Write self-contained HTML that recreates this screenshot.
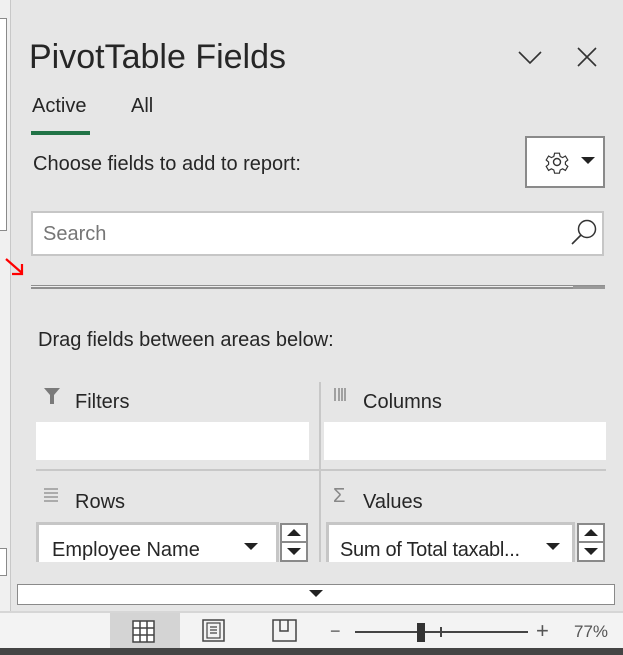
<!DOCTYPE html>
<html><head><style>
*{margin:0;padding:0;box-sizing:border-box}
body{width:623px;height:655px;overflow:hidden;background:#e6e6e6;font-family:"Segoe UI","Liberation Sans",sans-serif;color:#262626;position:relative}
.a{position:absolute}
.t{position:absolute;white-space:nowrap;line-height:1}
</style></head><body>
<div class="a" style="left:0;top:0;width:10px;height:612px;background:#f0f0f0"></div>
<div class="a" style="left:-2px;top:18px;width:9px;height:213px;background:#fff;border:1px solid #8a8a8a"></div>
<div class="a" style="left:-2px;top:548px;width:9px;height:28px;background:#fff;border:1px solid #8a8a8a"></div>
<div class="a" style="left:10px;top:0;width:1px;height:612px;background:#c8c8c8"></div>

<div class="t" style="left:29px;top:40px;font-size:34px;color:#262626">PivotTable Fields</div>
<svg class="a" style="left:517px;top:48px" width="26" height="18"><path d="M2 4 L13 15 L24 4" stroke="#333" stroke-width="1.6" fill="none"/></svg>
<svg class="a" style="left:576px;top:46px" width="22" height="22"><path d="M2 2 L20 20 M20 2 L2 20" stroke="#333" stroke-width="1.6" fill="none"/></svg>

<div class="t" style="left:32px;top:96px;font-size:20px">Active</div>
<div class="t" style="left:131px;top:96px;font-size:20px">All</div>
<div class="a" style="left:31px;top:131px;width:59px;height:4px;background:#217346"></div>

<div class="t" style="left:33px;top:154px;font-size:20px">Choose fields to add to report:</div>
<div class="a" style="left:525px;top:136px;width:80px;height:52px;background:#fff;border:2px solid #8a8a8a"></div>
<svg class="a" style="left:543px;top:148px" width="28" height="28" viewBox="0 0 28 28"><path d="M11 3h6l1 4 3 1.5 3.5-2 3 5-3 2.5v3l3 2.5-3 5-3.5-2-3 1.5-1 4h-6l-1-4-3-1.5-3.5 2-3-5 3-2.5v-3l-3-2.5 3-5 3.5 2 3-1.5z" transform="scale(.8) translate(3.5,3.5)" fill="none" stroke="#333" stroke-width="1.5"/><circle cx="14" cy="14" r="3.5" fill="none" stroke="#333" stroke-width="1.4"/></svg>
<svg class="a" style="left:581px;top:157px" width="14" height="8"><path d="M0 0H14L7 7z" fill="#222"/></svg>

<div class="a" style="left:31px;top:211px;width:573px;height:45px;background:#fff;border:2px solid #c6c6c6"></div>
<div class="t" style="left:43px;top:224px;font-size:20px;color:#767676">Search</div>
<svg class="a" style="left:569px;top:217px" width="32" height="30"><circle cx="18" cy="12" r="8.5" fill="none" stroke="#333" stroke-width="1.5"/><path d="M12 18 L3 27" stroke="#333" stroke-width="1.6"/></svg>

<div class="a" style="left:31px;top:285px;width:574px;height:4px;border-top:1px solid #8f8f8f;border-bottom:2px solid #8f8f8f;background:#eee"></div>
<div class="a" style="left:573px;top:286px;width:32px;height:3px;background:#999"></div>
<svg class="a" style="left:3px;top:256px" width="24" height="22"><path d="M3 3 L19 17 M19 8 V18 H9" stroke="#f00" stroke-width="2.2" fill="none"/></svg>

<div class="t" style="left:38px;top:330px;font-size:20px">Drag fields between areas below:</div>

<div class="a" style="left:319px;top:382px;width:2px;height:180px;background:#c8c8c8"></div>
<div class="a" style="left:36px;top:469px;width:570px;height:2px;background:#c8c8c8"></div>

<svg class="a" style="left:44px;top:388px" width="18" height="18"><path d="M0 0H16L10 7V16H6V7z" fill="#7a7a7a"/></svg>
<div class="t" style="left:75px;top:392px;font-size:20px">Filters</div>
<div class="a" style="left:36px;top:422px;width:273px;height:38px;background:#fff"></div>

<svg class="a" style="left:334px;top:388px" width="14" height="14"><path d="M1 0V13M5 0V13M8 0V13M11 0V13" stroke="#888" stroke-width="1.5"/></svg>
<div class="t" style="left:363px;top:392px;font-size:20px">Columns</div>
<div class="a" style="left:324px;top:422px;width:282px;height:38px;background:#fff"></div>

<svg class="a" style="left:44px;top:488px" width="16" height="14"><path d="M0 1H14M0 5H14M0 9H14M0 13H14" stroke="#888" stroke-width="1.3"/></svg>
<div class="t" style="left:75px;top:492px;font-size:20px">Rows</div>
<div class="t" style="left:333px;top:486px;font-size:20px;color:#888">Σ</div>
<div class="t" style="left:363px;top:492px;font-size:20px">Values</div>

<div class="a" style="left:36px;top:522px;width:243px;height:40px;background:#fff;border:3px solid #c6c6c6;border-bottom:none"></div>
<div class="t" style="left:52px;top:540px;font-size:20px">Employee Name</div>
<svg class="a" style="left:244px;top:543px" width="14" height="8"><path d="M0 0H14L7 7z" fill="#222"/></svg>
<div class="a" style="left:280px;top:523px;width:28px;height:39px;background:#fff;border:2px solid #8a8a8a"></div>
<div class="a" style="left:282px;top:541px;width:24px;height:2px;background:#8a8a8a"></div>
<svg class="a" style="left:285px;top:528px" width="18" height="30"><path d="M2 8H16L9 1z M2 20H16L9 27z" fill="#222"/></svg>

<div class="a" style="left:326px;top:522px;width:249px;height:40px;background:#fff;border:3px solid #c6c6c6;border-bottom:none;overflow:hidden"></div>
<div class="t" style="left:340px;top:540px;font-size:20px;letter-spacing:-0.3px">Sum of Total taxabl...</div>
<svg class="a" style="left:453px;top:543px;display:none" width="14" height="8"></svg>
<svg class="a" style="left:546px;top:543px" width="14" height="8"><path d="M0 0H14L7 7z" fill="#222"/></svg>
<div class="a" style="left:577px;top:523px;width:28px;height:39px;background:#fff;border:2px solid #8a8a8a"></div>
<div class="a" style="left:579px;top:541px;width:24px;height:2px;background:#8a8a8a"></div>
<svg class="a" style="left:582px;top:528px" width="18" height="30"><path d="M2 8H16L9 1z M2 20H16L9 27z" fill="#222"/></svg>

<div class="a" style="left:17px;top:584px;width:598px;height:21px;background:#fff;border:1px solid #8a8a8a"></div>
<svg class="a" style="left:309px;top:590px" width="14" height="8"><path d="M0 0H14L7 7z" fill="#222"/></svg>

<div class="a" style="left:0;top:611px;width:623px;height:37px;background:#f3f3f3;border-top:2px solid #d6d6d6"></div>
<div class="a" style="left:110px;top:613px;width:70px;height:35px;background:#d4d4d4"></div>
<svg class="a" style="left:132px;top:620px" width="24" height="24"><rect x="1" y="1" width="21" height="21" fill="#fff" stroke="#444" stroke-width="1.5"/><path d="M8 1V22M15 1V22M1 8H22M1 15H22" stroke="#444" stroke-width="1.5"/></svg>
<svg class="a" style="left:202px;top:619px" width="24" height="24"><rect x="1" y="1" width="21" height="21" fill="none" stroke="#444" stroke-width="1.5"/><rect x="5" y="4" width="13" height="15" fill="none" stroke="#444" stroke-width="1.2"/><path d="M8 8H15M8 11H15M8 14H15" stroke="#444" stroke-width="1.2"/></svg>
<svg class="a" style="left:272px;top:619px" width="26" height="24"><path d="M1 1H24V22H1z M8 1V12H16V1" fill="none" stroke="#444" stroke-width="1.5"/></svg>
<div class="t" style="left:330px;top:622px;font-size:18px;color:#555">−</div>
<div class="a" style="left:355px;top:631px;width:173px;height:2px;background:#444"></div>
<div class="a" style="left:417px;top:623px;width:8px;height:19px;background:#333"></div>
<div class="a" style="left:440px;top:627px;width:2px;height:10px;background:#444"></div>
<div class="t" style="left:536px;top:620px;font-size:22px;color:#555;font-weight:300">+</div>
<div class="t" style="left:574px;top:623px;font-size:17px;color:#555">77%</div>
<div class="a" style="left:0;top:648px;width:623px;height:7px;background:#444"></div>
</body></html>
